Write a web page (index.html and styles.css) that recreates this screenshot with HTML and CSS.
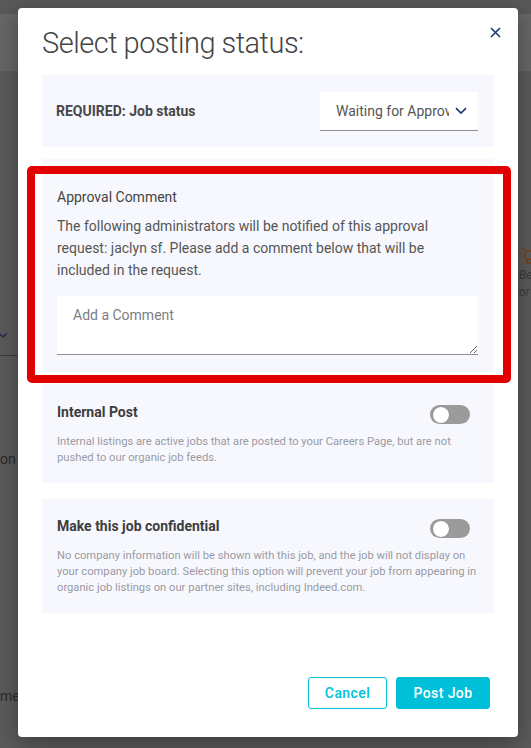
FILE: index.html
```html
<!DOCTYPE html>
<html lang="en">
<head>
<meta charset="utf-8">
<title>Select posting status</title>
<link rel="stylesheet" href="styles.css">
</head>
<body>
<div class="page">
  <div class="page-top"></div>
  <div class="page-header"></div>
  <div class="page-body">
    <div class="left-col">
      <svg class="left-chevron" width="8" height="6" viewBox="0 0 8 6"><path d="M0 1 L3 4 L7 0" fill="none" stroke="#1c2c4a" stroke-width="1.4"/></svg>
      <div class="left-rule"></div>
      <div class="left-on">on</div>
      <div class="left-me">me</div>
    </div>
    <div class="right-col">
      <svg class="bulb" width="14" height="16" viewBox="0 0 14 16"><g fill="none" stroke="#7a3f14" stroke-width="1.6"><path d="M0 4 L2 5"/><path d="M0 8 L2 8"/><path d="M3 0 L4 2"/><circle cx="10" cy="7" r="4.5"/><path d="M8 12 L8 15 L12 15"/></g></svg>
      <div class="right-text">Be</div>
      <div class="right-text">or</div>
    </div>
  </div>
</div>

<div class="modal">
  <div class="modal-head">
    <h1 class="modal-title">Select posting status:</h1>
    <button class="close" aria-label="Close">
      <svg width="11" height="11" viewBox="0 0 11 11"><path d="M1 1 L10 10 M10 1 L1 10" stroke="#1f3d72" stroke-width="1.7" fill="none"/></svg>
    </button>
  </div>

  <div class="section status">
    <div class="status-label">REQUIRED: Job status</div>
    <div class="select">
      <span class="select-text">Waiting for Approval</span>
      <svg class="select-chev" width="12" height="8" viewBox="0 0 12 8"><path d="M1 1.2 L6 6 L11 1.2" fill="none" stroke="#1f3d72" stroke-width="1.7"/></svg>
    </div>
  </div>

  <div class="section approval">
    <div class="approval-title">Approval Comment</div>
    <p class="approval-text">The following administrators will be notified of this approval request: jaclyn sf. Please add a comment below that will be included in the request.</p>
    <textarea class="comment" placeholder="Add a Comment"></textarea>
  </div>

  <div class="section option internal">
    <div class="option-head">
      <div class="option-title">Internal Post</div>
      <span class="toggle"><span class="knob"></span></span>
    </div>
    <p class="option-desc">Internal listings are active jobs that are posted to your Careers Page, but are not pushed to our organic job feeds.</p>
  </div>

  <div class="section option confidential">
    <div class="option-head">
      <div class="option-title">Make this job confidential</div>
      <span class="toggle"><span class="knob"></span></span>
    </div>
    <p class="option-desc">No company information will be shown with this job, and the job will not display on your company job board. Selecting this option will prevent your job from appearing in organic job listings on our partner sites, including Indeed.com.</p>
  </div>

  <div class="modal-foot">
    <button class="btn btn-cancel">Cancel</button>
    <button class="btn btn-post">Post Job</button>
  </div>
</div>

<div class="highlight"></div>
</body>
</html>
```

FILE: styles.css
```css
html, body {
  margin: 0;
  padding: 0;
}
body {
  width: 531px;
  height: 748px;
  overflow: hidden;
  background: #5c5c5c;
  font-family: Roboto, "Noto Sans", Arial, sans-serif;
  position: relative;
}

/* dimmed page behind the modal */
.page {
  display: flex;
  flex-direction: column;
  height: 748px;
}
.page-top {
  height: 14px;
  background: #595959;
}
.page-header {
  height: 57px;
  background: #676767;
}
.page-body {
  flex: 1;
  display: flex;
  justify-content: space-between;
  background: #5b5b5b;
}
.left-col {
  width: 18px;
  display: flex;
  flex-direction: column;
}
.left-chevron {
  margin-top: 262px;
  margin-left: 0;
}
.left-rule {
  margin-top: 16px;
  width: 18px;
  height: 1px;
  background: #3e3e3e;
}
.left-on {
  margin-top: 93px;
  font-size: 14px;
  line-height: 20px;
  color: #2c2c2c;
}
.left-me {
  margin-top: 217px;
  font-size: 14px;
  line-height: 20px;
  color: #2c2c2c;
}
.right-col {
  width: 12px;
  display: flex;
  flex-direction: column;
}
.bulb {
  margin-top: 177px;
  margin-left: 0;
}
.right-text {
  font-size: 12px;
  line-height: 17px;
  font-style: italic;
  color: #3a3a3a;
}
.right-text:first-of-type {
  margin-top: 3px;
}

/* modal */
.modal {
  position: absolute;
  left: 18px;
  top: 8px;
  width: 500px;
  height: 729px;
  box-sizing: border-box;
  padding: 0 24px;
  background: #fff;
  border-radius: 4px;
  box-shadow: 0 6px 24px rgba(0, 0, 0, 0.35);
  display: flex;
  flex-direction: column;
}
.modal-head {
  display: flex;
  justify-content: space-between;
  align-items: flex-start;
  padding-top: 17px;
}
.modal-title {
  margin: 0;
  font-size: 29px;
  line-height: 36px;
  font-weight: 300;
  color: #454545;
  letter-spacing: -0.5px;
}
.close {
  border: 0;
  background: none;
  padding: 0;
  margin: 2px -7px 0 0;
  width: 11px;
  height: 11px;
  display: flex;
}

.section {
  background: #f7f8fd;
  box-sizing: border-box;
}
.status {
  margin-top: 14px;
  height: 72px;
  display: flex;
  align-items: center;
  justify-content: space-between;
  padding: 0 16px 0 14px;
}
.status-label {
  font-size: 14px;
  font-weight: 700;
  color: #474747;
}
.select {
  width: 158px;
  height: 39px;
  box-sizing: border-box;
  background: #fff;
  border-bottom: 1px solid #8f8f95;
  display: flex;
  align-items: center;
  padding-left: 16px;
}
.select-text {
  width: 113px;
  overflow: hidden;
  white-space: nowrap;
  font-size: 14px;
  color: #555;
}
.select-chev {
  margin-left: 6px;
}

.approval {
  margin-top: 12px;
  padding: 28px 16px 17px 15px;
}
.approval-title {
  font-size: 14px;
  line-height: 20px;
  color: #444;
}
.approval-text {
  margin: 8px 0 0;
  max-width: 400px;
  font-size: 14px;
  line-height: 22px;
  color: #555;
}
.comment {
  display: block;
  margin-top: 15px;
  width: 100%;
  height: 59px;
  box-sizing: border-box;
  border: 0;
  border-bottom: 1px solid #8f8f95;
  background: #fff;
  padding: 9px 16px;
  font-family: Roboto, "Noto Sans", Arial, sans-serif;
  font-size: 14px;
  line-height: 20px;
  color: #444;
  resize: vertical;
  outline: none;
}
.comment::placeholder {
  color: #7d7d85;
}

.option {
  padding: 18px 16px 17px 15px;
}
.internal {
  margin-top: 12px;
}
.confidential {
  margin-top: 16px;
  padding-top: 17px;
}
.option-head {
  display: flex;
  justify-content: space-between;
  align-items: flex-start;
}
.option-title {
  font-size: 14px;
  line-height: 20px;
  font-weight: 700;
  color: #3d3d3d;
}
.toggle {
  width: 40px;
  height: 19px;
  margin: 3px 8px 0 0;
  border-radius: 10px;
  background: #9b9b9b;
  display: flex;
  align-items: center;
  padding-left: 3px;
  box-sizing: border-box;
}
.knob {
  width: 16px;
  height: 16px;
  border-radius: 50%;
  background: #fff;
  box-shadow: 0 0 1px rgba(0, 0, 0, 0.3);
}
.option-desc {
  margin: 10px 0 0;
  font-size: 11.2px;
  line-height: 16px;
  color: #9a9aa3;
}

.modal-foot {
  margin-top: auto;
  margin-right: 4px;
  padding-bottom: 28px;
  display: flex;
  justify-content: flex-end;
  gap: 9px;
}
.btn {
  height: 32px;
  box-sizing: border-box;
  border-radius: 3px;
  font-family: Roboto, "Noto Sans", Arial, sans-serif;
  font-size: 14px;
  font-weight: 500;
  letter-spacing: 0.4px;
  cursor: pointer;
}
.btn-cancel {
  width: 79px;
  background: #fff;
  border: 1px solid #00bfd8;
  color: #00bfd8;
}
.btn-post {
  width: 94px;
  background: #00bfd8;
  border: 1px solid #00bfd8;
  color: #fff;
}

/* annotation frame over the comment section */
.highlight {
  position: absolute;
  left: 27px;
  top: 166px;
  width: 484px;
  height: 217px;
  box-sizing: border-box;
  border: 8px solid #e30000;
  border-radius: 5px;
}
```
